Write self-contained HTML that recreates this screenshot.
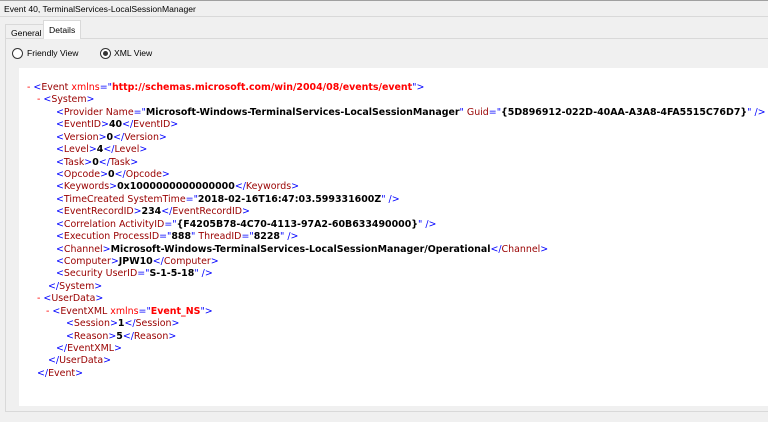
<!DOCTYPE html>
<html><head><style>
*{margin:0;padding:0;box-sizing:border-box}
body{width:768px;height:422px;background:#f0f0f0;position:relative;overflow:hidden;font-family:"Liberation Sans",sans-serif;font-size:12px;color:#000}
.title{position:absolute;left:0;top:0;width:768px;height:17px;border-top:1px solid #a0a0a0;border-bottom:1px solid #d9d9d9;font-size:8.6px;padding:3px 0 0 4px;color:#000}
.tab{position:absolute;font-size:8.6px;border:1px solid #d9d9d9;border-bottom:none}
.panel{position:absolute;left:5px;top:38px;width:770px;height:374px;border:1px solid #d9d9d9;background:#f0f0f0}
.radio{position:absolute;width:11px;height:11px;border:1px solid #333;border-radius:50%;background:#fff}
.lbl{position:absolute;font-size:8.6px}
.box{position:absolute;left:19px;top:68px;width:760px;height:338px;background:#fff}
.xml{position:absolute;left:0;top:82px;font-family:"DejaVu Sans",Verdana,sans-serif;font-size:9.45px;line-height:12.43px;white-space:pre}
.l{position:absolute;white-space:pre}
.b{color:#0000ff}.t{color:#990000}.a{color:#ff0000}.v{font-weight:bold}.r{color:#ff0000;font-weight:bold}.m{color:#ff0000}
</style></head><body>
<div class="title">Event 40, TerminalServices-LocalSessionManager</div>
<div class="tab" style="left:5px;top:24px;width:39px;height:15px;padding:3px 0 0 5px;background:#f0f0f0">General</div>
<div class="tab" style="left:43px;top:20px;width:38px;height:19px;padding:4px 0 0 5px;background:#fff;z-index:2">Details</div>
<div class="panel"></div>
<div class="radio" style="left:12px;top:48px"></div>
<div class="lbl" style="left:27px;top:48px">Friendly View</div>
<div class="radio" style="left:100px;top:48px"><div style="position:absolute;left:2px;top:2px;width:5px;height:5px;border-radius:50%;background:#333"></div></div>
<div class="lbl" style="left:114px;top:48px">XML View</div>
<div class="box"></div>
<div class="xml">
<div class="l" style="top:0;left:27px"><span class="m">-</span> <span class="b">&lt;</span><span class="t">Event</span> <span class="a">xmlns</span><span class="b">="</span><span class="r">http://schemas.microsoft.com/win/2004/08/events/event</span><span class="b">"&gt;</span></div>
<div class="l" style="top:12.43px;left:37px"><span class="m">-</span> <span class="b">&lt;</span><span class="t">System</span><span class="b">&gt;</span></div>
<div class="l" style="top:24.86px;left:56px"><span class="b">&lt;</span><span class="t">Provider Name</span><span class="b">="</span><span class="v">Microsoft-Windows-TerminalServices-LocalSessionManager</span><span class="b">"</span> <span class="t">Guid</span><span class="b">="</span><span class="v">{5D896912-022D-40AA-A3A8-4FA5515C76D7}</span><span class="b">" /&gt;</span></div>
<div class="l" style="top:37.29px;left:56px"><span class="b">&lt;</span><span class="t">EventID</span><span class="b">&gt;</span><span class="v">40</span><span class="b">&lt;/</span><span class="t">EventID</span><span class="b">&gt;</span></div>
<div class="l" style="top:49.72px;left:56px"><span class="b">&lt;</span><span class="t">Version</span><span class="b">&gt;</span><span class="v">0</span><span class="b">&lt;/</span><span class="t">Version</span><span class="b">&gt;</span></div>
<div class="l" style="top:62.15px;left:56px"><span class="b">&lt;</span><span class="t">Level</span><span class="b">&gt;</span><span class="v">4</span><span class="b">&lt;/</span><span class="t">Level</span><span class="b">&gt;</span></div>
<div class="l" style="top:74.58px;left:56px"><span class="b">&lt;</span><span class="t">Task</span><span class="b">&gt;</span><span class="v">0</span><span class="b">&lt;/</span><span class="t">Task</span><span class="b">&gt;</span></div>
<div class="l" style="top:87.01px;left:56px"><span class="b">&lt;</span><span class="t">Opcode</span><span class="b">&gt;</span><span class="v">0</span><span class="b">&lt;/</span><span class="t">Opcode</span><span class="b">&gt;</span></div>
<div class="l" style="top:99.44px;left:56px"><span class="b">&lt;</span><span class="t">Keywords</span><span class="b">&gt;</span><span class="v">0x1000000000000000</span><span class="b">&lt;/</span><span class="t">Keywords</span><span class="b">&gt;</span></div>
<div class="l" style="top:111.87px;left:56px"><span class="b">&lt;</span><span class="t">TimeCreated SystemTime</span><span class="b">="</span><span class="v">2018-02-16T16:47:03.599331600Z</span><span class="b">" /&gt;</span></div>
<div class="l" style="top:124.3px;left:56px"><span class="b">&lt;</span><span class="t">EventRecordID</span><span class="b">&gt;</span><span class="v">234</span><span class="b">&lt;/</span><span class="t">EventRecordID</span><span class="b">&gt;</span></div>
<div class="l" style="top:136.73px;left:56px"><span class="b">&lt;</span><span class="t">Correlation ActivityID</span><span class="b">="</span><span class="v">{F4205B78-4C70-4113-97A2-60B633490000}</span><span class="b">" /&gt;</span></div>
<div class="l" style="top:149.16px;left:56px"><span class="b">&lt;</span><span class="t">Execution ProcessID</span><span class="b">="</span><span class="v">888</span><span class="b">"</span> <span class="t">ThreadID</span><span class="b">="</span><span class="v">8228</span><span class="b">" /&gt;</span></div>
<div class="l" style="top:161.59px;left:56px"><span class="b">&lt;</span><span class="t">Channel</span><span class="b">&gt;</span><span class="v">Microsoft-Windows-TerminalServices-LocalSessionManager/Operational</span><span class="b">&lt;/</span><span class="t">Channel</span><span class="b">&gt;</span></div>
<div class="l" style="top:174.02px;left:56px"><span class="b">&lt;</span><span class="t">Computer</span><span class="b">&gt;</span><span class="v">JPW10</span><span class="b">&lt;/</span><span class="t">Computer</span><span class="b">&gt;</span></div>
<div class="l" style="top:186.45px;left:56px"><span class="b">&lt;</span><span class="t">Security UserID</span><span class="b">="</span><span class="v">S-1-5-18</span><span class="b">" /&gt;</span></div>
<div class="l" style="top:198.88px;left:48px"><span class="b">&lt;/</span><span class="t">System</span><span class="b">&gt;</span></div>
<div class="l" style="top:211.31px;left:37px"><span class="m">-</span> <span class="b">&lt;</span><span class="t">UserData</span><span class="b">&gt;</span></div>
<div class="l" style="top:223.74px;left:46px"><span class="m">-</span> <span class="b">&lt;</span><span class="t">EventXML</span> <span class="a">xmlns</span><span class="b">="</span><span class="r">Event_NS</span><span class="b">"&gt;</span></div>
<div class="l" style="top:236.17px;left:66px"><span class="b">&lt;</span><span class="t">Session</span><span class="b">&gt;</span><span class="v">1</span><span class="b">&lt;/</span><span class="t">Session</span><span class="b">&gt;</span></div>
<div class="l" style="top:248.6px;left:66px"><span class="b">&lt;</span><span class="t">Reason</span><span class="b">&gt;</span><span class="v">5</span><span class="b">&lt;/</span><span class="t">Reason</span><span class="b">&gt;</span></div>
<div class="l" style="top:261.03px;left:56px"><span class="b">&lt;/</span><span class="t">EventXML</span><span class="b">&gt;</span></div>
<div class="l" style="top:273.46px;left:48px"><span class="b">&lt;/</span><span class="t">UserData</span><span class="b">&gt;</span></div>
<div class="l" style="top:285.89px;left:37px"><span class="b">&lt;/</span><span class="t">Event</span><span class="b">&gt;</span></div>
</div>
</body></html>
